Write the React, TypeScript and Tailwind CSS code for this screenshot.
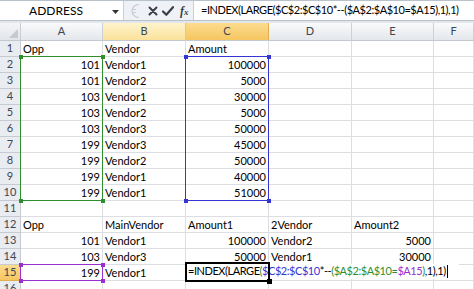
import React from 'react';

type V = string | number | null;

const data: V[][] = [
  ['Opp', 'Vendor', 'Amount', null, null, null],
  [101, 'Vendor1', 100000, null, null, null],
  [101, 'Vendor2', 5000, null, null, null],
  [103, 'Vendor1', 30000, null, null, null],
  [103, 'Vendor2', 5000, null, null, null],
  [103, 'Vendor3', 50000, null, null, null],
  [199, 'Vendor3', 45000, null, null, null],
  [199, 'Vendor2', 50000, null, null, null],
  [199, 'Vendor1', 40000, null, null, null],
  [199, 'Vendor1', 51000, null, null, null],
  [null, null, null, null, null, null],
  ['Opp', 'MainVendor', 'Amount1', '2Vendor', 'Amount2', null],
  [101, 'Vendor1', 100000, 'Vendor2', 5000, null],
  [103, 'Vendor3', 50000, 'Vendor1', 30000, null],
  [199, 'Vendor1', null, null, null, null],
  [null, null, null, null, null, null],
];

const colW = ['w-[82px]', 'w-[83px]', 'w-[83px]', 'w-[83px]', 'w-[82px]', 'flex-1'];
const letters = ['A', 'B', 'C', 'D', 'E', 'F'];

function ColHeader({ i }: { i: number }) {
  const base = 'h-full flex items-center justify-center border-r shrink-0 ' + colW[i];
  let cls = 'bg-linear-to-b from-[#f9fafb] to-[#e4e7eb] border-[#cdd1d6] text-[#3d4654]';
  if (i === 1) cls = 'bg-linear-to-b from-[#fef3cc] to-[#fbe29a] border-[#e8c97a] text-[#3d4654]';
  if (i === 2) cls = 'bg-linear-to-b from-[#fbdc8e] to-[#f6c55f] border-[#e0b04f] text-[#3d4654]';
  return <div className={base + ' ' + cls}>{letters[i]}</div>;
}

function Handle({ x, y, color }: { x: number; y: number; color: string }) {
  return (
    <div
      className="absolute w-[4px] h-[4px]"
      style={{ left: x - 1.5, top: y - 1.5, background: color }}
    />
  );
}

function RangeBox({ l, t, r, b, color }: { l: number; t: number; r: number; b: number; color: string }) {
  return (
    <>
      <div
        className="absolute border"
        style={{ left: l, top: t, width: r - l + 1, height: b - t + 1, borderColor: color }}
      />
      <Handle x={l} y={t} color={color} />
      <Handle x={r} y={t} color={color} />
      <Handle x={l} y={b} color={color} />
      <Handle x={r} y={b} color={color} />
    </>
  );
}

const OFF = 23;

export default function App() {
  return (
    <div
      className="w-[474px] h-[289px] overflow-hidden bg-white text-[11px] text-black"
      style={{ fontFamily: 'Lato, "Liberation Sans", sans-serif' }}
    >
      {/* formula bar */}
      <div className="h-[21px] flex border-t border-b border-[#b9c1cb] bg-[#eef1f5]">
        <div className="w-[124px] bg-white flex items-center border-r border-[#c9cfd7]">
          <div className="w-[112px] text-center text-[12px]">ADDRESS</div>
          <svg width="7" height="4" viewBox="0 0 7 4" className="mt-[3px]">
            <path d="M0 0 L7 0 L3.5 4 Z" fill="#333" />
          </svg>
        </div>
        <div className="w-[69px] flex items-center">
          <svg width="14" height="16" viewBox="0 0 14 16" className="ml-[2px]">
            <path d="M13 1.5 A 7 6.5 0 0 0 13 14.5" fill="none" stroke="#c3c8cf" strokeWidth="1.2" />
            <path d="M6 6.5 h4 M6 9.5 h4" stroke="#c9cdd3" strokeWidth="1" />
          </svg>
          <svg width="10" height="10" viewBox="0 0 10 10" className="ml-[8px]">
            <path d="M1.5 1.5 L8.5 8.5 M8.5 1.5 L1.5 8.5" stroke="#3b3f45" strokeWidth="2" strokeLinecap="round" />
          </svg>
          <svg width="12" height="10" viewBox="0 0 12 10" className="ml-[4px]">
            <path d="M1 5.5 L4.3 8.8 L11 1.2" fill="none" stroke="#3b3f45" strokeWidth="2.2" strokeLinecap="round" strokeLinejoin="round" />
          </svg>
          <span
            className="ml-[6px] italic text-[12px] text-[#3b3f45] font-bold"
            style={{ fontFamily: '"Liberation Serif", serif' }}
          >
            f<span className="text-[9px]">x</span>
          </span>
        </div>
        <div className="flex-1 bg-white border-l border-[#c9cfd7] flex items-center pl-[7px] whitespace-nowrap overflow-hidden text-[11px] tracking-[-0.45px]">
          =INDEX(LARGE($C$2:$C$10*--($A$2:$A$10=$A15),1),1)
        </div>
      </div>
      <div className="h-[2px] bg-[#e3e7ec]" />

      {/* sheet */}
      <div className="relative">
        <div className="h-[18px] flex border-b border-[#c3c8ce]">
          <div className="w-[21px] h-full shrink-0 bg-linear-to-b from-[#f4f5f7] to-[#e2e5e9] border-r border-[#c9cdd2] relative">
            <svg width="9" height="9" viewBox="0 0 9 9" className="absolute right-[2px] bottom-[2px]">
              <path d="M9 0 L9 9 L0 9 Z" fill="#c5cad0" />
            </svg>
          </div>
          {letters.map((_, i) => (
            <ColHeader key={i} i={i} />
          ))}
        </div>
        {data.map((row, ri) => {
          const rn = ri + 1;
          const sel = rn === 15;
          return (
            <div key={ri} className="h-[16px] flex">
              <div
                className={
                  'w-[21px] shrink-0 h-full flex items-center justify-center border-r border-b text-[#3d4654] ' +
                  (sel
                    ? 'bg-linear-to-b from-[#fbdc8e] to-[#f6c55f] border-[#e0b04f]'
                    : 'bg-[#e9ecf0] border-[#c7cbd1]')
                }
              >
                {rn}
              </div>
              {row.map((v, ci) => (
                <div
                  key={ci}
                  className={
                    'h-full shrink-0 border-r border-b border-[#dcdee1] px-[2px] leading-[16px] whitespace-nowrap overflow-hidden ' +
                    colW[ci] +
                    (typeof v === 'number' ? ' text-right' : ' text-left')
                  }
                >
                  {v}
                </div>
              ))}
            </div>
          );
        })}

        {/* reference range highlights */}
        <RangeBox l={20} t={56 - OFF} r={102} b={200 - OFF} color="#2f8f2f" />
        <RangeBox l={185} t={56 - OFF} r={268} b={200 - OFF} color="#3535d6" />
        <RangeBox l={20} t={264 - OFF} r={102} b={280 - OFF} color="#9a2fd0" />

        {/* in-cell editing */}
        <div
          className="absolute bg-white whitespace-nowrap flex items-center tracking-[-0.45px]"
          style={{ left: 187, top: 264 - OFF, height: 15, width: 272 }}
        >
          <span className="pl-[1px]">=INDEX(LARGE</span>
          <span className="text-[#2f8f2f]">(</span>
          <span className="text-[#3535d6]">$C$2:$C$10</span>
          <span>*--</span>
          <span className="text-[#2f8f2f]">($A$2:$A$10=</span>
          <span className="text-[#9a2fd0]">$A15</span>
          <span className="text-[#2f8f2f]">)</span>
          <span>,1),1)</span>
          <span className="inline-block w-[1px] h-[13px] bg-black ml-[1px]" />
        </div>
        <div
          className="absolute border-2 border-black"
          style={{ left: 185, top: 262 - OFF, width: 85, height: 20 }}
        />
        <div className="absolute bg-black" style={{ left: 267, top: 279 - OFF, width: 5, height: 5 }} />
      </div>
    </div>
  );
}
